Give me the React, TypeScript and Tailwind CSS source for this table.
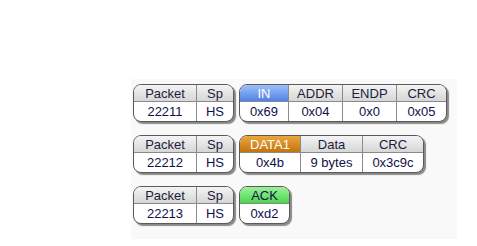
type Col = { label: string; value: string; w: number };

type BoxProps = {
  cols: Col[];
  accent?: "blue" | "orange" | "green";
};

const accentClass = {
  blue: "bg-gradient-to-b from-[#9cc0f8] to-[#4f82e6] text-white",
  orange: "bg-gradient-to-b from-[#eaa63c] to-[#c47408] text-white",
  green: "bg-gradient-to-b from-[#9af09a] to-[#48d648] text-[#10104a]",
};

// one rounded packet field group
const FieldBox = ({ cols, accent }: BoxProps) => {
  return (
    <div className="flex rounded-[8px] border border-[#5a5a5a] bg-white overflow-hidden shadow-[2px_2px_1px_rgba(0,0,0,0.45)]">
      {cols.map((c, i) => (
        <div
          key={c.label}
          style={{ width: c.w }}
          className={`flex flex-col ${i > 0 ? "border-l border-[#8a8a8a]" : ""}`}
        >
          <div
            className={`h-[17px] flex items-center justify-center border-b border-[#8a8a8a] leading-none ${
              i === 0 && accent
                ? accentClass[accent]
                : "bg-gradient-to-b from-[#f4f4f4] to-[#d6d6d6] text-[#1c1c3c]"
            }`}
          >
            {c.label}
          </div>
          <div className="h-[19px] flex items-center justify-center text-[#10104a] leading-none">{c.value}</div>
        </div>
      ))}
    </div>
  );
};

const rows: { packet: string; accent: "blue" | "orange" | "green"; cols: Col[] }[] = [
  {
    packet: "22211",
    accent: "blue",
    cols: [
      { label: "IN", value: "0x69", w: 48 },
      { label: "ADDR", value: "0x04", w: 54 },
      { label: "ENDP", value: "0x0", w: 54 },
      { label: "CRC", value: "0x05", w: 50 },
    ],
  },
  {
    packet: "22212",
    accent: "orange",
    cols: [
      { label: "DATA1", value: "0x4b", w: 60 },
      { label: "Data", value: "9 bytes", w: 62 },
      { label: "CRC", value: "0x3c9c", w: 61 },
    ],
  },
  {
    packet: "22213",
    accent: "green",
    cols: [{ label: "ACK", value: "0xd2", w: 49 }],
  },
];

export default function App() {
  return (
    <div className="w-[477px] h-[246px] bg-white pl-[131px] pt-[79px] font-['Liberation_Sans',Arial,sans-serif] text-[13px]">
      <div className="w-[326px] h-[160px] bg-[#f9f9f9] pl-[2px] pt-[5px] flex flex-col gap-[13px]">
        {rows.map((r) => (
          <div key={r.packet} className="flex items-start gap-[5px]">
            <FieldBox
              cols={[
                { label: "Packet", value: r.packet, w: 62 },
                { label: "Sp", value: "HS", w: 37 },
              ]}
            />
            <FieldBox cols={r.cols} accent={r.accent} />
          </div>
        ))}
      </div>
    </div>
  );
}
